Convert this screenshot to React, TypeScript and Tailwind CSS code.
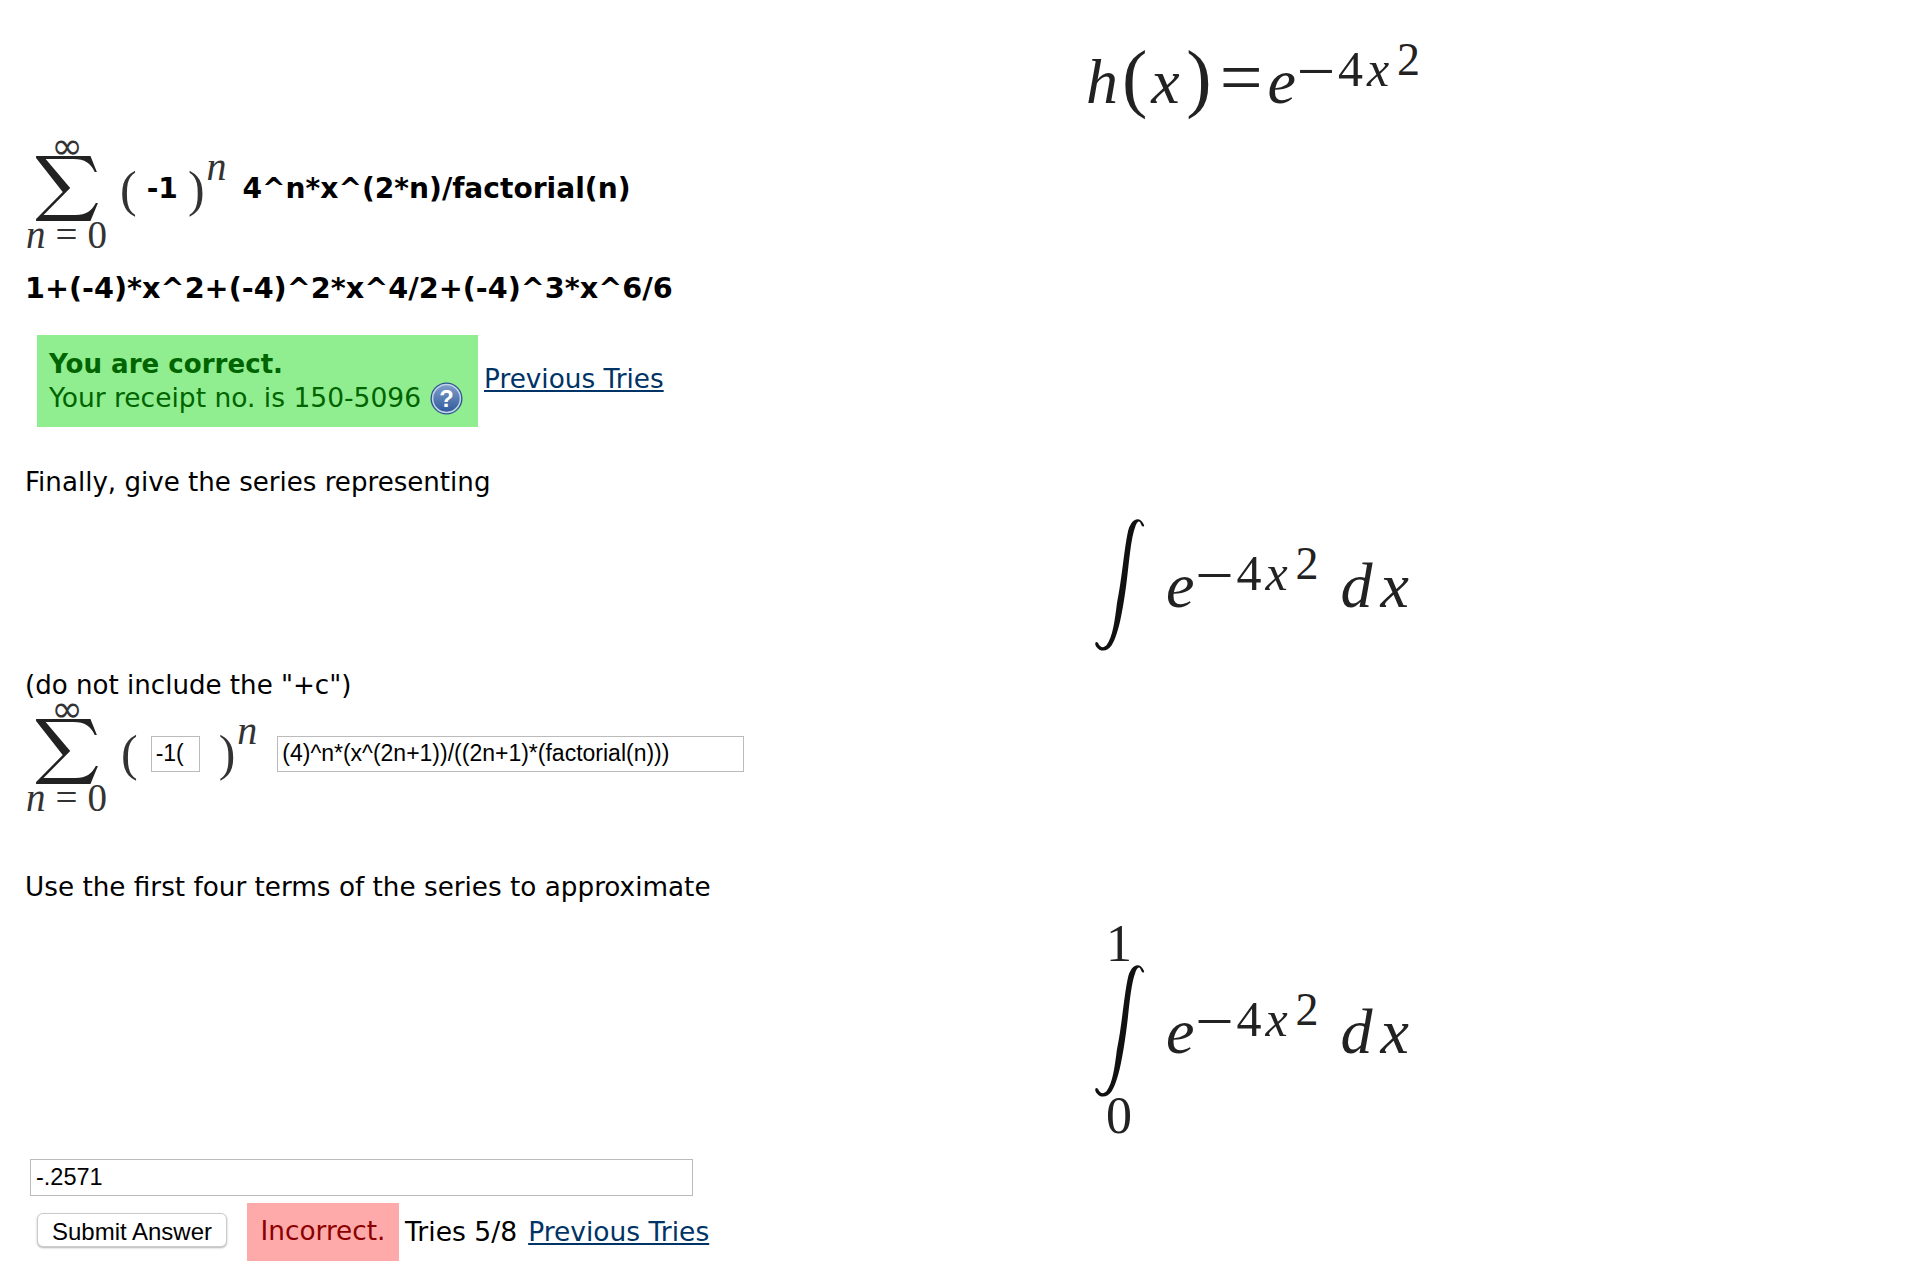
const ui = { fontFamily: '"DejaVu Sans", Verdana, sans-serif' }

function Sigma() {
  return (
    <svg viewBox="0 0 60 66" className="h-[66px] w-[64px]" preserveAspectRatio="none">
      <path
        d="M1 1 H52 L58 17 H56 C52 8 47 4 36 4 H10 L33 33 L8 60 H38 C48 60 53 56 57 48 H59 L52 66 H1 V64 L26 37 L1 3 Z"
        fill="#222"
      />
    </svg>
  )
}

function Sum() {
  return (
    <div className="flex w-[82px] flex-col items-center font-['Liberation_Serif',serif] text-[#333]">
      <div className="h-[18px] font-['DejaVu_Sans',sans-serif] text-[38px] leading-[18px]">∞</div>
      <Sigma />
      <div className="h-[28px] w-full whitespace-nowrap text-[39px] leading-[28px]">
        <i>n</i>
        <span className="mx-[10px]">=</span>0
      </div>
    </div>
  )
}

function Integral() {
  return (
    <svg viewBox="0 0 50 130" className="h-[136px] w-[52px] shrink-0">
      <path
        d="M48 8 C44 0 37 1 33 13 C29 30 27 60 22 84 C20 100 18 116 12 124 C9 127 6 126 4 122 C2 119 0 122 2 125 C6 131 13 130 17 124 C24 113 28 88 31 66 C34 44 35 22 40 9 C42 4 44 4 45 7 C46 10 49 11 48 8 Z"
        fill="#111"
      />
    </svg>
  )
}

function PrevTries() {
  return (
    <a href="#" className="whitespace-nowrap text-[#003366] underline">
      Previous Tries
    </a>
  )
}

function HelpIcon() {
  return (
    <svg viewBox="0 0 32 32" className="h-[33px] w-[33px] shrink-0">
      <defs>
        <linearGradient id="helpFill" x1="0" y1="0" x2="0" y2="1">
          <stop offset="0" stopColor="#7f9ecb" />
          <stop offset="1" stopColor="#2f5a9c" />
        </linearGradient>
      </defs>
      <circle cx="16" cy="16" r="15.5" fill="#2c5590" />
      <circle cx="16" cy="16" r="13.5" fill="url(#helpFill)" stroke="#c3d2e6" strokeWidth="1.5" />
      <text x="16" y="24" textAnchor="middle" fontSize="23" fontWeight="700" fill="#fff" fontFamily="Liberation Sans">
        ?
      </text>
    </svg>
  )
}

function ExpFormula() {
  return (
    <span className="whitespace-nowrap">
      <i>e</i>
      <span className="ml-[3px] align-[17px] text-[50px]">
        <span className="inline-block w-[34px] text-center text-[62px] leading-none">–</span>
        <span className="ml-[5px]">4</span>
        <i className="ml-[4px] inline-block w-[28px]">x</i>
        <span className="ml-[2px] align-[11px] text-[46px]">2</span>
      </span>
    </span>
  )
}

function IntegralBody() {
  return (
    <>
      <Integral />
      <div className="mb-[12px] ml-[20px] flex items-baseline">
        <ExpFormula />
        <span className="ml-[22px] italic">d</span>
        <span className="ml-[8px] italic">x</span>
      </div>
    </>
  )
}

export default function App() {
  return (
    <div className="flex min-h-[1278px] w-[1908px] bg-white text-[26.1px] text-black" style={ui}>
      <div className="w-[1086px] shrink-0 pt-[135px]">
        <div className="flex h-[115px] items-center pl-[26px]">
          <Sum />
          <div className="ml-[12px] mt-[-6px] flex items-center text-[28.1px] font-bold">
            <span className="font-['Liberation_Serif',serif] text-[50px] font-normal text-[#333]">(</span>
            <span className="mx-[10px]">-1</span>
            <span className="font-['Liberation_Serif',serif] text-[50px] font-normal text-[#333]">)</span>
            <span className="mb-[46px] ml-[2px] font-['Liberation_Serif',serif] text-[40px] font-normal italic text-[#333]">n</span>
            <span className="ml-[16px]">4^n*x^(2*n)/factorial(n)</span>
          </div>
        </div>

        <div className="mt-[23px] pl-[25px] text-[28.7px] font-bold leading-[30px]">1+(-4)*x^2+(-4)^2*x^4/2+(-4)^3*x^6/6</div>

        <div className="mt-[32px] ml-[37px] flex items-center">
          <div className="h-[92px] w-[441px] bg-[#90ee90] px-[12px] pt-[12px] leading-[34px] text-[#006400]">
            <div className="font-bold">You are correct.</div>
            <div className="flex items-center whitespace-nowrap text-[26.5px]">
              Your receipt no. is 150-5096
              <span className="ml-[9px]">
                <HelpIcon />
              </span>
            </div>
          </div>
          <div className="ml-[6px] mb-[2px] text-[26.3px]">
            <PrevTries />
          </div>
        </div>

        <div className="mt-[38px] pl-[25px] leading-[34px]">Finally, give the series representing</div>
        <div className="mt-[169px] pl-[25px] leading-[34px]">(do not include the "+c")</div>

        <div className="mt-[-3px] flex h-[114px] items-center pl-[26px]">
          <Sum />
          <div className="ml-[13px] mt-[-5px] flex items-center">
            <span className="font-['Liberation_Serif',serif] text-[50px] text-[#333]">(</span>
            <input
              readOnly
              value="-1("
              className="ml-[13px] h-[36px] w-[49px] border border-[#bbb] px-[4px] font-['Liberation_Sans',sans-serif] text-[23px]"
            />
            <span className="ml-[19px] font-['Liberation_Serif',serif] text-[50px] text-[#333]">)</span>
            <span className="mb-[46px] ml-[2px] font-['Liberation_Serif',serif] text-[40px] italic text-[#333]">n</span>
            <input
              readOnly
              value="(4)^n*(x^(2n+1))/((2n+1)*(factorial(n)))"
              className="ml-[20px] h-[36px] w-[467px] border border-[#bbb] px-[4px] font-['Liberation_Sans',sans-serif] text-[23px]"
            />
          </div>
        </div>

        <div className="mt-[57px] pl-[25px] text-[26.25px] leading-[34px]">Use the first four terms of the series to approximate</div>

        <div className="mt-[255px] pl-[30px]">
          <input
            readOnly
            value="-.2571"
            className="block h-[37px] w-[663px] border border-[#bbb] px-[5px] font-['Liberation_Sans',sans-serif] text-[23.5px]"
          />
        </div>

        <div className="mt-[7px] flex items-center pl-[37px] text-[26.3px]">
          <button className="mb-[5px] h-[34px] w-[190px] rounded-[6px] border border-[#ccc] bg-white font-['Liberation_Sans',sans-serif] text-[24px] shadow-[0_1px_2px_rgba(0,0,0,0.3)]">
            Submit Answer
          </button>
          <div className="ml-[20px] flex h-[58px] w-[152px] items-center justify-center bg-[#ffaaaa] text-[#8b0000]">
            Incorrect.
          </div>
          <span className="ml-[6px] whitespace-nowrap text-[26.6px]">Tries 5/8</span>
          <span className="ml-[11px] text-[26.5px]">
            <PrevTries />
          </span>
        </div>
      </div>

      <div className="flex-1 font-['Liberation_Serif',serif] text-[64px] leading-none text-[#222]">
        <div className="mt-[34px] flex h-[74px] items-baseline whitespace-nowrap">
          <i>h</i>
          <span className="mx-[4px] text-[76px] font-light">(</span>
          <i className="inline-block w-[32px]">x</i>
          <span className="mx-[3px] text-[76px] font-light">)</span>
          <span className="mx-[5px] text-[76px]">=</span>
          <ExpFormula />
        </div>

        <div className="ml-[8px] mt-[408px] flex h-[136px] items-center">
          <IntegralBody />
        </div>

        <div className="ml-[8px] mt-[274px]">
          <div className="ml-[12px] h-[36px] text-[52px] leading-[36px]">1</div>
          <div className="flex h-[136px] items-center">
            <IntegralBody />
          </div>
          <div className="ml-[12px] h-[36px] text-[52px] leading-[36px]">0</div>
        </div>
      </div>
    </div>
  )
}
